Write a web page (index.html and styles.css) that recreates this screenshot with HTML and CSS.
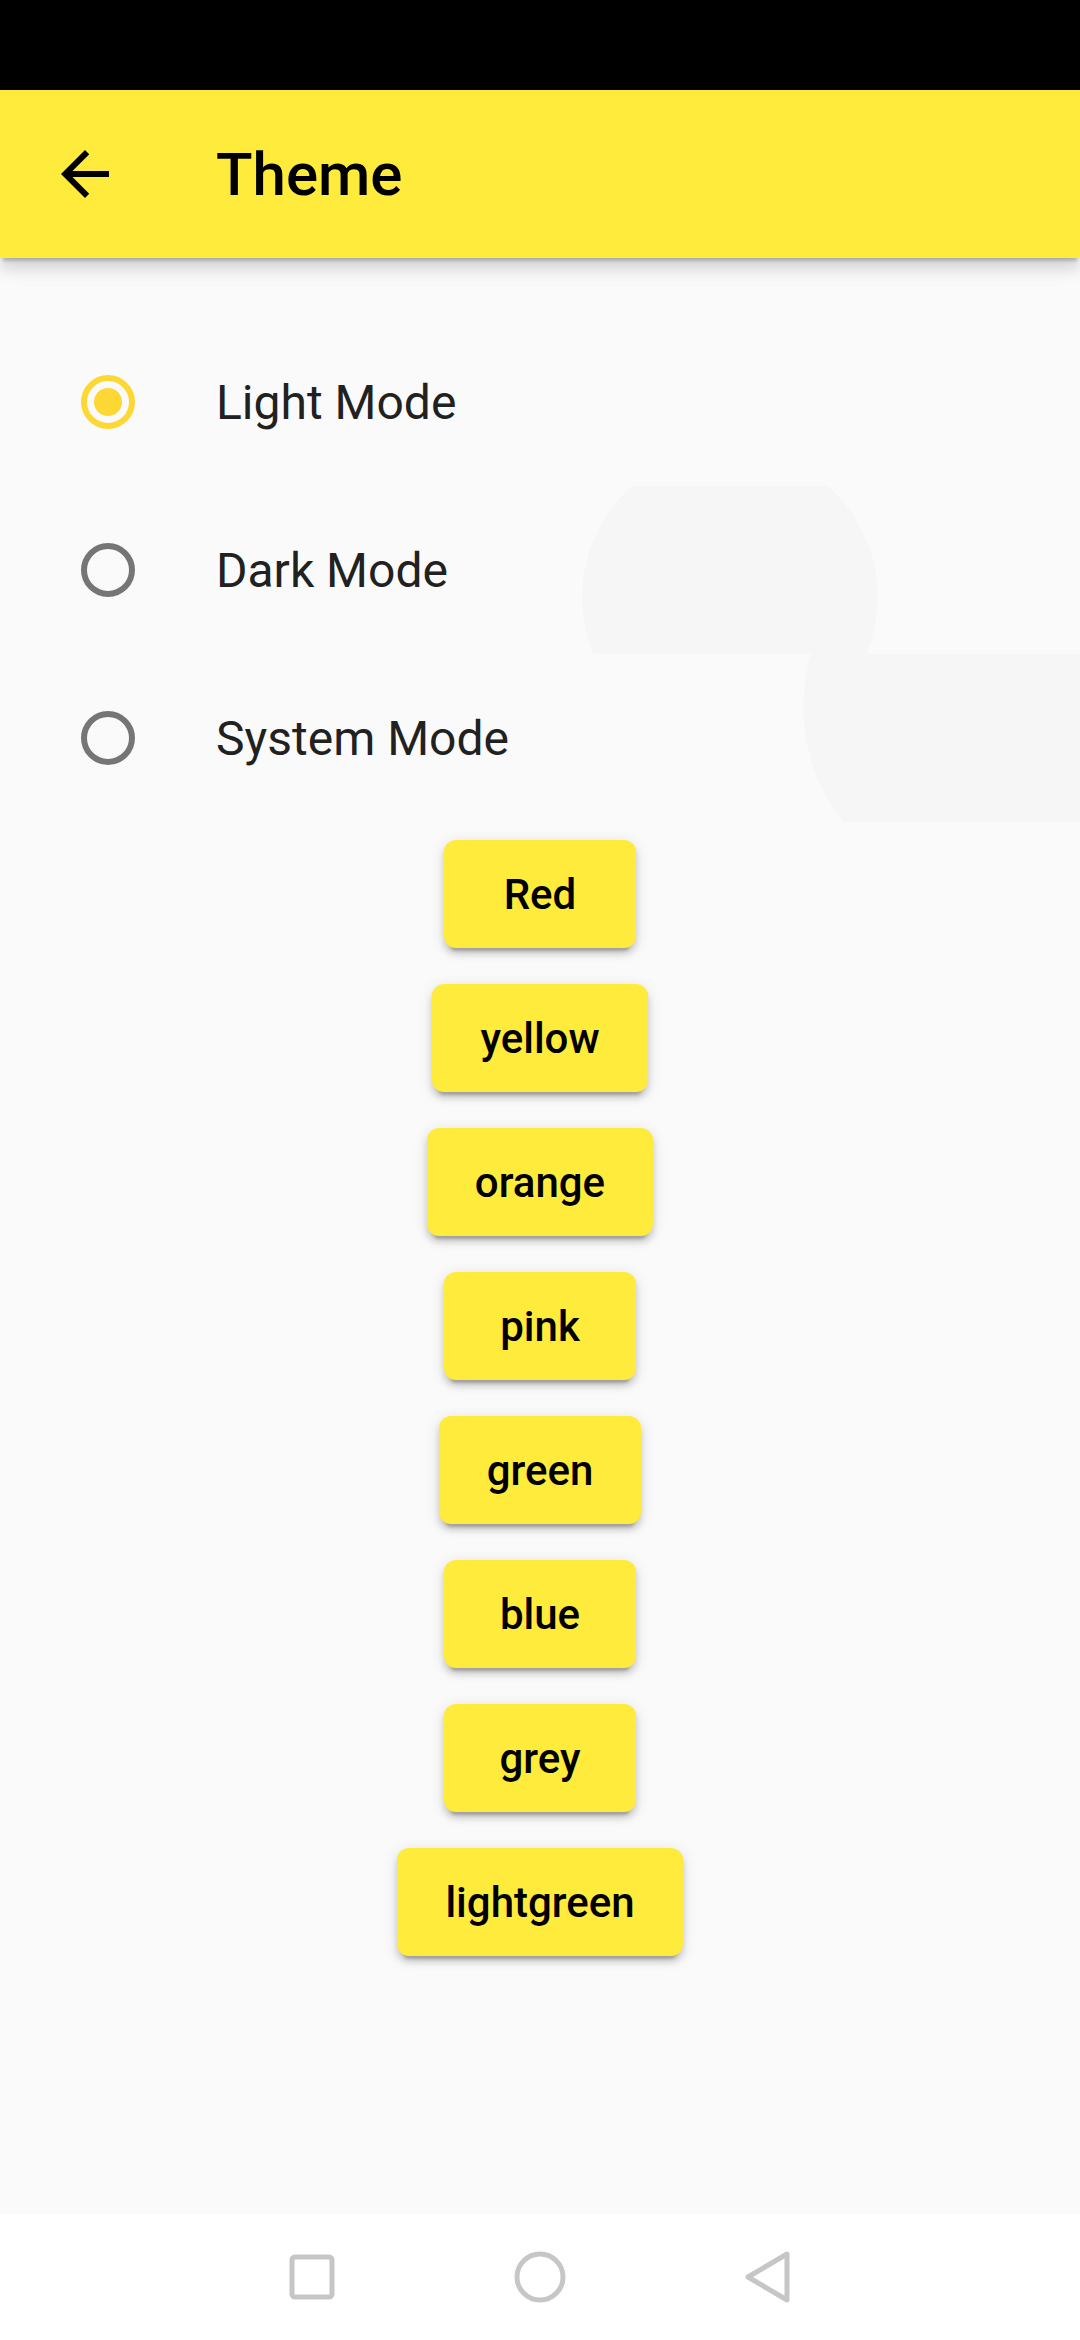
FILE: index.html
```html
<!DOCTYPE html>
<html lang="en">
<head>
    <meta charset="UTF-8">
    <meta name="viewport" content="width=device-width, initial-scale=1.0">
    <title>Theme</title>
    <link rel="stylesheet" href="styles.css">
</head>
<body>
    <div class="status-bar"></div>

    <header class="app-bar">
        <svg class="back-icon" viewBox="0 0 24 24" width="72" height="72">
            <path d="M20 11H7.83l5.59-5.59L12 4l-8 8 8 8 1.41-1.41L7.83 13H20v-2z" fill="#000"/>
        </svg>
        <h1 class="title">Theme</h1>
    </header>

    <main class="content">
        <div class="modes">
            <div class="mode-row">
                <div class="radio-box"><span class="radio radio-on"></span></div>
                <span class="mode-label">Light Mode</span>
            </div>
            <div class="mode-row">
                <span class="splash splash-dark"></span>
                <div class="radio-box"><span class="radio"></span></div>
                <span class="mode-label">Dark Mode</span>
            </div>
            <div class="mode-row">
                <span class="splash splash-system"></span>
                <div class="radio-box"><span class="radio"></span></div>
                <span class="mode-label">System Mode</span>
            </div>
        </div>

        <div class="colors">
            <button class="color-button">Red</button>
            <button class="color-button">yellow</button>
            <button class="color-button">orange</button>
            <button class="color-button">pink</button>
            <button class="color-button">green</button>
            <button class="color-button">blue</button>
            <button class="color-button">grey</button>
            <button class="color-button">lightgreen</button>
        </div>
    </main>

    <nav class="nav-bar">
        <div class="nav-item">
            <svg viewBox="0 0 50 50" width="50" height="50">
                <rect x="5" y="5" width="40" height="40" rx="3" fill="none" stroke="#c6c6c6" stroke-width="5"/>
            </svg>
        </div>
        <div class="nav-item">
            <svg viewBox="0 0 56 56" width="56" height="56">
                <circle cx="28" cy="28" r="23" fill="none" stroke="#c6c6c6" stroke-width="5"/>
            </svg>
        </div>
        <div class="nav-item">
            <svg viewBox="0 0 50 56" width="50" height="56">
                <path d="M44 5 L5 28 L44 51 Z" fill="none" stroke="#c6c6c6" stroke-width="5" stroke-linejoin="round"/>
            </svg>
        </div>
    </nav>
</body>
</html>
```

FILE: styles.css
```css
body {
    margin: 0;
    width: 1080px;
    height: 2340px;
    display: flex;
    flex-direction: column;
    background-color: #fafafa;
    font-family: Roboto, "Noto Sans", sans-serif;
    overflow: hidden;
}
.status-bar {
    height: 90px;
    background-color: #000;
}
.app-bar {
    height: 168px;
    display: flex;
    align-items: center;
    padding-left: 49px;
    background-color: #ffeb3b;
    box-shadow: 0 6px 3px -3px rgba(0, 0, 0, 0.2), 0 12px 12px 0 rgba(0, 0, 0, 0.1), 0 3px 30px 0 rgba(0, 0, 0, 0.08);
    position: relative;
    z-index: 2;
}
.back-icon {
    display: block;
}
.title {
    margin: 0 0 0 95px;
    font-size: 60px;
    font-weight: 500;
    color: #000;
}
.content {
    flex: 1;
    padding-top: 60px;
}
.mode-row {
    height: 168px;
    display: flex;
    align-items: center;
    padding-left: 48px;
    position: relative;
    overflow: hidden;
}
.radio-box {
    width: 120px;
    display: flex;
    justify-content: center;
    margin-right: 48px;
    position: relative;
}
.radio {
    width: 54px;
    height: 54px;
    box-sizing: border-box;
    border: 6px solid #757575;
    border-radius: 50%;
    display: flex;
    align-items: center;
    justify-content: center;
}
.radio-on {
    border-color: #fdd835;
}
.radio-on::after {
    content: "";
    width: 28px;
    height: 28px;
    border-radius: 50%;
    background-color: #fdd835;
}
.mode-label {
    font-size: 48px;
    color: #212121;
    position: relative;
}
/* leftover ink splashes */
.splash {
    position: absolute;
    border-radius: 50%;
    background-color: #f6f6f6;
}
.splash-dark {
    left: 582px;
    top: -37px;
    width: 296px;
    height: 296px;
}
.splash-system {
    left: 803px;
    top: -132px;
    width: 370px;
    height: 370px;
}
.colors {
    display: flex;
    flex-direction: column;
    align-items: center;
}
.color-button {
    height: 108px;
    min-width: 192px;
    margin: 18px 0;
    padding: 0 48px;
    border: none;
    border-radius: 12px;
    background-color: #ffeb3b;
    color: #000;
    font-family: Roboto, "Noto Sans", sans-serif;
    font-size: 42px;
    font-weight: 500;
    box-shadow: 0 9px 3px -6px rgba(0, 0, 0, 0.2), 0 6px 6px 0 rgba(0, 0, 0, 0.14), 0 3px 15px 0 rgba(0, 0, 0, 0.12);
}
.nav-bar {
    height: 126px;
    display: flex;
    justify-content: center;
    align-items: center;
    gap: 128px;
    background-color: #fff;
}
.nav-item {
    width: 100px;
    display: flex;
    justify-content: center;
}
.nav-item svg {
    display: block;
}
```
